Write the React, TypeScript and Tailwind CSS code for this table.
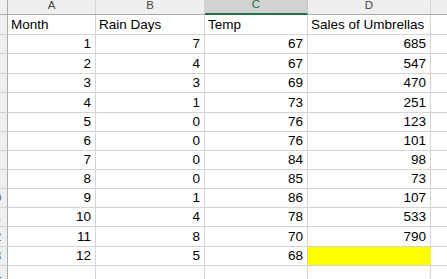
import React from "react";

const data: [number, number, number, number | null][] = [
  [1, 7, 67, 685],
  [2, 4, 67, 547],
  [3, 3, 69, 470],
  [4, 1, 73, 251],
  [5, 0, 76, 123],
  [6, 0, 76, 101],
  [7, 0, 84, 98],
  [8, 0, 85, 73],
  [9, 1, 86, 107],
  [10, 4, 78, 533],
  [11, 8, 70, 790],
  [12, 5, 68, null],
];

const rowH = [
  "h-[20px]", "h-[19px]", "h-[20px]", "h-[19px]", "h-[20px]", "h-[19px]", "h-[19px]",
  "h-[19px]", "h-[19px]", "h-[19px]", "h-[19px]", "h-[20px]", "h-[19px]", "h-[20px]",
];

function RowHead({ n, h }: { n: number; h: string }) {
  return (
    <div className={`${h} w-[8px] shrink-0 overflow-hidden border-r border-b border-r-[#ababab] border-b-[#d4d4d4] bg-[#efefef] flex items-end`}>
      <div className="w-[26px] ml-[-19px] shrink-0 text-center text-[13px] leading-[16px] pb-[1px] text-[#444]">{n}</div>
    </div>
  );
}

function Cell({ w, children, right, h, yellow }: { w: string; children?: React.ReactNode; right?: boolean; h: string; yellow?: boolean }) {
  return (
    <div
      className={`${w} ${h} shrink-0 border-r border-b border-[#d4d4d4] flex items-end pb-[1px] leading-[16px] ${right ? "justify-end pr-[4px]" : "pl-[3px]"} ${yellow ? "bg-[#ffff00] border-r-[#ffff00]" : "bg-white"}`}
    >
      <span className="whitespace-nowrap">{children}</span>
    </div>
  );
}

function ColHead({ w, label, active }: { w: string; label: string; active?: boolean }) {
  return (
    <div
      className={`${w} h-[15px] shrink-0 border-r flex items-end justify-center pb-[2px] text-[11.5px] leading-[14px] ${active ? "bg-[#d2d2d2] text-[#217346] border-b-2 border-b-[#217346] border-r-[#c6c6c6]" : "bg-[#efefef] text-[#444] border-b border-b-[#ababab] border-r-[#d4d4d4]"}`}
    >
      {label}
    </div>
  );
}

export default function App() {
  return (
    <div
      className="w-[447px] h-[279px] overflow-hidden bg-white text-black text-[13.5px]"
      style={{ fontFamily: '"Liberation Sans", Arial, sans-serif' }}
    >
      <div className="flex">
        <div className="w-[8px] h-[15px] shrink-0 bg-[#efefef] border-r border-b border-r-[#ababab] border-b-[#ababab]" />
        <ColHead w="w-[88px]" label="A" />
        <ColHead w="w-[109px]" label="B" />
        <ColHead w="w-[103px]" label="C" active />
        <ColHead w="w-[123px]" label="D" />
        <ColHead w="w-[40px]" label="" />
      </div>
      <div className="flex">
        <RowHead n={1} h={rowH[0]} />
        <Cell w="w-[88px]" h={rowH[0]}>Month</Cell>
        <Cell w="w-[109px]" h={rowH[0]}>Rain Days</Cell>
        <Cell w="w-[103px]" h={rowH[0]}>Temp</Cell>
        <Cell w="w-[123px]" h={rowH[0]}>Sales of Umbrellas</Cell>
        <Cell w="w-[40px]" h={rowH[0]} />
      </div>
      {data.map((r, i) => {
        const h = rowH[i + 1];
        return (
          <div className="flex" key={i}>
            <RowHead n={i + 2} h={h} />
            <Cell w="w-[88px]" h={h} right>{r[0]}</Cell>
            <Cell w="w-[109px]" h={h} right>{r[1]}</Cell>
            <Cell w="w-[103px]" h={h} right>{r[2]}</Cell>
            <Cell w="w-[123px]" h={h} right yellow={r[3] === null}>{r[3]}</Cell>
            <Cell w="w-[40px]" h={h} />
          </div>
        );
      })}
      <div className="flex">
        <RowHead n={14} h={rowH[13]} />
        <Cell w="w-[88px]" h={rowH[13]} />
        <Cell w="w-[109px]" h={rowH[13]} />
        <Cell w="w-[103px]" h={rowH[13]} />
        <Cell w="w-[123px]" h={rowH[13]} />
        <Cell w="w-[40px]" h={rowH[13]} />
      </div>
    </div>
  );
}
